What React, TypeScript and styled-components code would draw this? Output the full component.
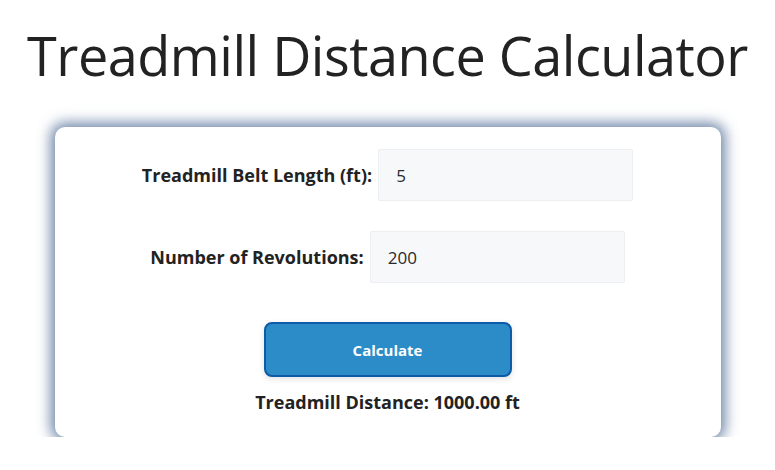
import { FC, useState } from 'react';
import styled, { createGlobalStyle } from 'styled-components';

const GlobalStyle = createGlobalStyle`
  body {
    margin: 0;
    background: #ffffff;
    font-family: 'Open Sans', 'Noto Sans', sans-serif;
    color: #222;
  }
`;

const App: FC = () => {
  const [beltLength, setBeltLength] = useState('5');
  const [revolutions, setRevolutions] = useState('200');
  const [distance, setDistance] = useState(1000);

  const handleCalculate = () => {
    const value = parseFloat(beltLength) * parseFloat(revolutions);
    setDistance(isNaN(value) ? 0 : value);
  };

  return (
    <Page>
      <GlobalStyle />
      <Title>Treadmill Distance Calculator</Title>
      <Card>
        <Row>
          <Label htmlFor='belt'>Treadmill Belt Length (ft):</Label>
          <Input
            id='belt'
            type='text'
            value={beltLength}
            onChange={(e) => setBeltLength(e.target.value)}
          />
        </Row>
        <Row>
          <Label htmlFor='revs'>Number of Revolutions:</Label>
          <Input
            id='revs'
            type='text'
            value={revolutions}
            onChange={(e) => setRevolutions(e.target.value)}
          />
        </Row>
        <Button type='button' onClick={handleCalculate}>
          Calculate
        </Button>
        <Result>Treadmill Distance: {distance.toFixed(2)} ft</Result>
      </Card>
    </Page>
  );
};

export default App;

const Page = styled.div`
  display: flex;
  flex-direction: column;
  align-items: center;
  padding-top: 18px;
`;

const Title = styled.h1`
  margin: 0 0 35px;
  font-size: 54px;
  font-weight: 400;
  line-height: 74px;
  letter-spacing: -0.5px;
  color: #222;
`;

const Card = styled.div`
  box-sizing: border-box;
  width: 666px;
  height: 310px;
  background: #ffffff;
  border-radius: 10px;
  box-shadow: 0 0 14px 4px rgba(45, 80, 130, 0.7);
  padding: 22px 0 0;
  display: flex;
  flex-direction: column;
  align-items: center;
`;

const Row = styled.div`
  display: flex;
  align-items: center;
  gap: 6px;
  margin-bottom: 30px;
`;

const Label = styled.label`
  font-size: 18px;
  font-weight: 700;
  color: #222;
`;

const Input = styled.input`
  box-sizing: border-box;
  width: 255px;
  height: 52px;
  padding: 0 17px;
  font-family: inherit;
  font-size: 17px;
  color: #2a2a2a;
  background: #f7f8fa;
  border: 1px solid #eceef1;
  border-radius: 2px;
  outline: none;
`;

const Button = styled.button`
  box-sizing: border-box;
  width: 248px;
  height: 55px;
  margin-top: 9px;
  background: #2b8cc8;
  border: 2px solid #0d5aa8;
  border-radius: 8px;
  color: #ffffff;
  font-family: inherit;
  font-size: 15px;
  font-weight: 700;
  cursor: pointer;
  box-shadow: 0 2px 6px rgba(0, 0, 0, 0.12);
`;

const Result = styled.div`
  margin-top: 13px;
  font-size: 18px;
  font-weight: 700;
  color: #222;
`;
